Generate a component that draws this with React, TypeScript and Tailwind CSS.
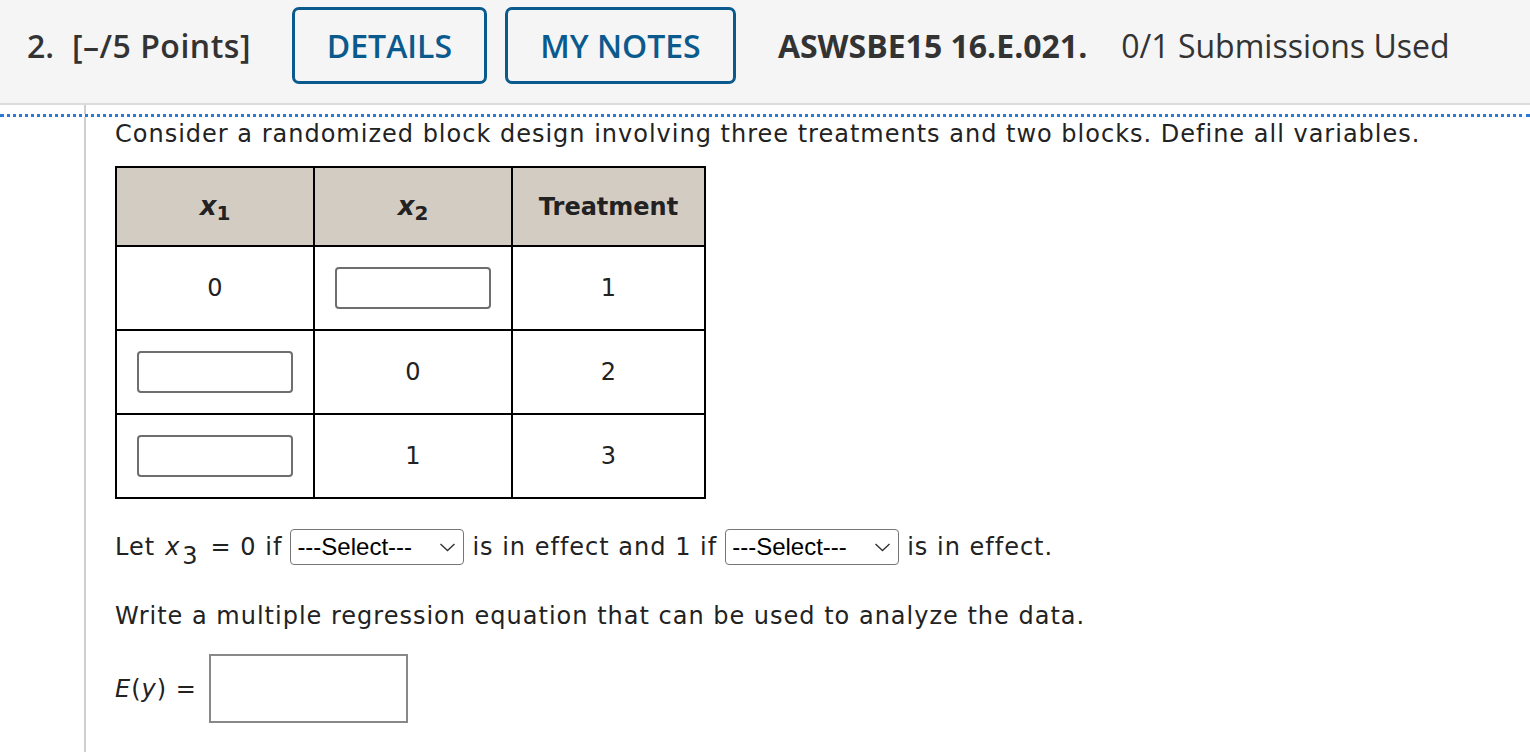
import React from 'react';

const body = { fontFamily: '"DejaVu Sans", Verdana, sans-serif' };

const Chevron: React.FC = () => (
  <svg width="17" height="10" viewBox="0 0 17 10" fill="none" stroke="#333" strokeWidth="1.4">
    <path d="M1.5 2 L8.5 8.5 L15.5 2" />
  </svg>
);

const SelectBox: React.FC = () => (
  <span
    className="mx-[8px] inline-flex h-[36px] w-[174px] items-center justify-between rounded-[4px] border border-[#767676] bg-white pl-[6px] pr-[7px] align-middle text-[24px] tracking-normal text-black"
    style={{ fontFamily: '"Liberation Sans", Arial, sans-serif' }}
  >
    <span>---Select---</span>
    <Chevron />
  </span>
);

const CellInput: React.FC = () => (
  <div className="mx-auto h-[42px] w-[156px] rounded-[4px] border-2 border-[#6e6e6e] bg-white" />
);

const App: React.FC = () => {
  return (
    <div className="min-h-[752px] bg-white text-[#222]">
      <header
        className="flex h-[105px] items-start border-b-2 border-[#dcdcdc] bg-[#f5f5f5] pl-[27px] pt-[7px] text-[32px] text-[#333]"
        style={{ fontFamily: '"Open Sans", sans-serif' }}
      >
        <div className="flex h-[77px] items-center">
          <span className="font-semibold">2.</span>
          <span className="ml-[18px] font-semibold tracking-[0.5px]">[–/5 Points]</span>
        </div>
        <div className="ml-[41px] flex h-[77px] w-[195px] items-center justify-center rounded-[7px] border-[3px] border-[#0b5a8e] font-semibold text-[#0b5a8e]">
          DETAILS
        </div>
        <div className="ml-[18px] flex h-[77px] w-[231px] items-center justify-center rounded-[7px] border-[3px] border-[#0b5a8e] font-semibold text-[#0b5a8e]">
          MY NOTES
        </div>
        <div className="flex h-[77px] items-center">
          <span className="ml-[42px] font-bold">ASWSBE15 16.E.021.</span>
          <span className="ml-[34px]">0/1 Submissions Used</span>
        </div>
      </header>

      <div className="flex h-[9px]">
        <div className="w-[84px]" />
        <div className="border-l-2 border-[#cfcfcf]" />
      </div>
      <div className="border-t-[3px] border-dotted border-[#2a7bd8]" />

      <div className="flex">
        <div className="w-[84px] shrink-0" />
        <div
          className="min-h-[640px] flex-1 border-l-2 border-[#cfcfcf] pl-[29px] text-[24px] tracking-[1px] text-[#222]"
          style={body}
        >
          <p className="mt-[1px] leading-[32px]">
            Consider a randomized block design involving three treatments and two blocks. Define all variables.
          </p>

          <table className="mt-[16px] border-collapse border-2 border-black text-center tracking-normal">
            <thead>
              <tr className="h-[79px] bg-[#d3ccc3]">
                <th className="w-[198px] border-2 border-black text-[26px] font-bold italic">
                  x<sub className="text-[20px] not-italic">1</sub>
                </th>
                <th className="w-[198px] border-2 border-black text-[26px] font-bold italic">
                  x<sub className="text-[20px] not-italic">2</sub>
                </th>
                <th className="w-[193px] border-2 border-black font-bold">Treatment</th>
              </tr>
            </thead>
            <tbody>
              <tr className="h-[84px]">
                <td className="border-2 border-black">0</td>
                <td className="border-2 border-black"><CellInput /></td>
                <td className="border-2 border-black">1</td>
              </tr>
              <tr className="h-[84px]">
                <td className="border-2 border-black"><CellInput /></td>
                <td className="border-2 border-black">0</td>
                <td className="border-2 border-black">2</td>
              </tr>
              <tr className="h-[84px]">
                <td className="border-2 border-black"><CellInput /></td>
                <td className="border-2 border-black">1</td>
                <td className="border-2 border-black">3</td>
              </tr>
            </tbody>
          </table>

          <p className="mt-[30px] flex items-center leading-[36px]">
            <span>Let</span>
            <span className="ml-[10px] italic">x</span>
            <span className="relative top-[9px] ml-[2px]">3</span>
            <span className="ml-[12px]">= 0 if</span>
            <SelectBox />
            <span>is in effect and 1 if</span>
            <SelectBox />
            <span>is in effect.</span>
          </p>

          <p className="mt-[35px] leading-[32px]">
            Write a multiple regression equation that can be used to analyze the data.
          </p>

          <div className="mt-[22px] flex items-center">
            <span className="italic">E</span>(<span className="italic">y</span>) =
            <div className="ml-[12px] h-[69px] w-[199px] border-2 border-[#888]" />
          </div>
        </div>
      </div>
    </div>
  );
};

export default App;
